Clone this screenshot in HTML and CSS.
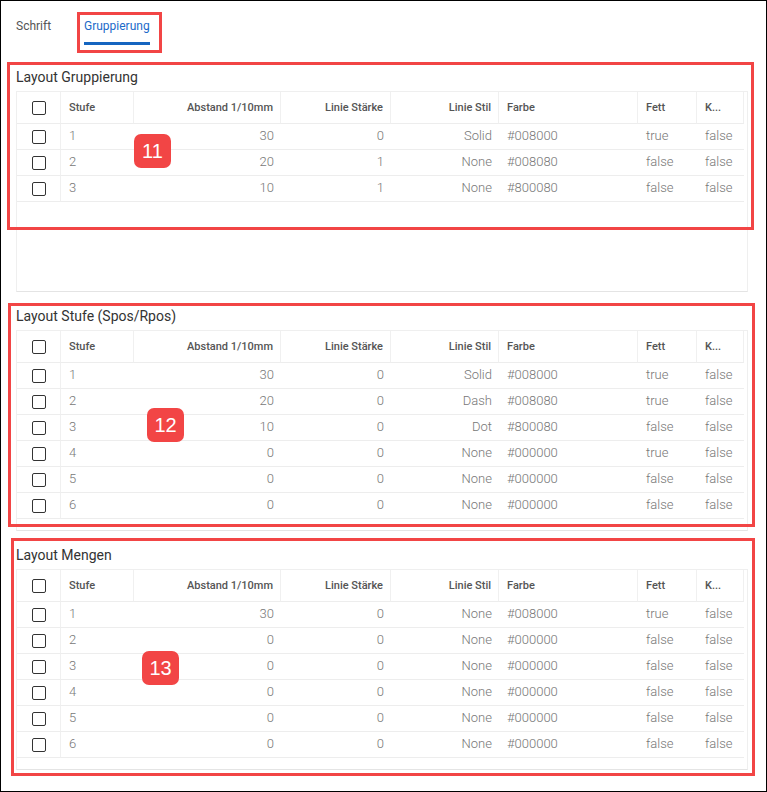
FILE: index.html
```html
<!DOCTYPE html>
<html lang="de">
<head>
    <meta charset="UTF-8">
    <meta name="viewport" content="width=device-width, initial-scale=1.0">
    <title>Layout</title>
    <link rel="stylesheet" href="styles.css">
</head>
<body>
    <div class="page">
        <nav class="tabs">
            <div class="tab"><span class="tab-label">Schrift</span></div>
            <div class="tab active"><span class="tab-label">Gruppierung</span></div>
        </nav>

        <section class="layout-section">
            <h2 class="section-title">Layout Gruppierung</h2>
            <div class="grid-panel">
                <table class="grid">
                    <colgroup>
                        <col class="c-check"><col class="c-stufe"><col class="c-abstand"><col class="c-staerke">
                        <col class="c-stil"><col class="c-farbe"><col class="c-fett"><col class="c-k">
                    </colgroup>
                    <thead>
                        <tr>
                            <th class="check"><span class="box"></span></th>
                            <th>Stufe</th>
                            <th class="num">Abstand 1/10mm</th>
                            <th class="num">Linie Stärke</th>
                            <th class="num">Linie Stil</th>
                            <th>Farbe</th>
                            <th>Fett</th>
                            <th>K...</th>
                        </tr>
                    </thead>
                    <tbody>
                        <tr><td class="check"><span class="box"></span></td><td>1</td><td class="num">30</td><td class="num">0</td><td class="num">Solid</td><td>#008000</td><td>true</td><td>false</td></tr>
                        <tr><td class="check"><span class="box"></span></td><td>2</td><td class="num">20</td><td class="num">1</td><td class="num">None</td><td>#008080</td><td>false</td><td>false</td></tr>
                        <tr><td class="check"><span class="box"></span></td><td>3</td><td class="num">10</td><td class="num">1</td><td class="num">None</td><td>#800080</td><td>false</td><td>false</td></tr>
                    </tbody>
                </table>
            </div>
        </section>

        <section class="layout-section">
            <h2 class="section-title">Layout Stufe (Spos/Rpos)</h2>
            <div class="grid-panel">
                <table class="grid">
                    <colgroup>
                        <col class="c-check"><col class="c-stufe"><col class="c-abstand"><col class="c-staerke">
                        <col class="c-stil"><col class="c-farbe"><col class="c-fett"><col class="c-k">
                    </colgroup>
                    <thead>
                        <tr>
                            <th class="check"><span class="box"></span></th>
                            <th>Stufe</th>
                            <th class="num">Abstand 1/10mm</th>
                            <th class="num">Linie Stärke</th>
                            <th class="num">Linie Stil</th>
                            <th>Farbe</th>
                            <th>Fett</th>
                            <th>K...</th>
                        </tr>
                    </thead>
                    <tbody>
                        <tr><td class="check"><span class="box"></span></td><td>1</td><td class="num">30</td><td class="num">0</td><td class="num">Solid</td><td>#008000</td><td>true</td><td>false</td></tr>
                        <tr><td class="check"><span class="box"></span></td><td>2</td><td class="num">20</td><td class="num">0</td><td class="num">Dash</td><td>#008080</td><td>true</td><td>false</td></tr>
                        <tr><td class="check"><span class="box"></span></td><td>3</td><td class="num">10</td><td class="num">0</td><td class="num">Dot</td><td>#800080</td><td>false</td><td>false</td></tr>
                        <tr><td class="check"><span class="box"></span></td><td>4</td><td class="num">0</td><td class="num">0</td><td class="num">None</td><td>#000000</td><td>true</td><td>false</td></tr>
                        <tr><td class="check"><span class="box"></span></td><td>5</td><td class="num">0</td><td class="num">0</td><td class="num">None</td><td>#000000</td><td>false</td><td>false</td></tr>
                        <tr><td class="check"><span class="box"></span></td><td>6</td><td class="num">0</td><td class="num">0</td><td class="num">None</td><td>#000000</td><td>false</td><td>false</td></tr>
                    </tbody>
                </table>
            </div>
        </section>

        <section class="layout-section">
            <h2 class="section-title">Layout Mengen</h2>
            <div class="grid-panel">
                <table class="grid">
                    <colgroup>
                        <col class="c-check"><col class="c-stufe"><col class="c-abstand"><col class="c-staerke">
                        <col class="c-stil"><col class="c-farbe"><col class="c-fett"><col class="c-k">
                    </colgroup>
                    <thead>
                        <tr>
                            <th class="check"><span class="box"></span></th>
                            <th>Stufe</th>
                            <th class="num">Abstand 1/10mm</th>
                            <th class="num">Linie Stärke</th>
                            <th class="num">Linie Stil</th>
                            <th>Farbe</th>
                            <th>Fett</th>
                            <th>K...</th>
                        </tr>
                    </thead>
                    <tbody>
                        <tr><td class="check"><span class="box"></span></td><td>1</td><td class="num">30</td><td class="num">0</td><td class="num">None</td><td>#008000</td><td>true</td><td>false</td></tr>
                        <tr><td class="check"><span class="box"></span></td><td>2</td><td class="num">0</td><td class="num">0</td><td class="num">None</td><td>#000000</td><td>false</td><td>false</td></tr>
                        <tr><td class="check"><span class="box"></span></td><td>3</td><td class="num">0</td><td class="num">0</td><td class="num">None</td><td>#000000</td><td>false</td><td>false</td></tr>
                        <tr><td class="check"><span class="box"></span></td><td>4</td><td class="num">0</td><td class="num">0</td><td class="num">None</td><td>#000000</td><td>false</td><td>false</td></tr>
                        <tr><td class="check"><span class="box"></span></td><td>5</td><td class="num">0</td><td class="num">0</td><td class="num">None</td><td>#000000</td><td>false</td><td>false</td></tr>
                        <tr><td class="check"><span class="box"></span></td><td>6</td><td class="num">0</td><td class="num">0</td><td class="num">None</td><td>#000000</td><td>false</td><td>false</td></tr>
                    </tbody>
                </table>
            </div>
        </section>
    </div>

    <!-- Markierungen -->
    <div class="mark mark-tab"></div>
    <div class="mark mark-1"></div>
    <div class="mark mark-2"></div>
    <div class="mark mark-3"></div>
    <div class="badge badge-1">11</div>
    <div class="badge badge-2">12</div>
    <div class="badge badge-3">13</div>
</body>
</html>
```

FILE: styles.css
```css
body {
    margin: 0;
    position: relative;
    font-family: Roboto, "Liberation Sans", sans-serif;
    background: #fff;
}
.page {
    height: 792px;
    box-sizing: border-box;
    border: 1px solid #000;
    padding: 0 18px 0 15px;
}
.tabs {
    display: flex;
    height: 44px;
    margin-bottom: 8px;
}
.tab {
    width: 68px;
    padding-top: 17px;
    font-size: 12px;
    color: #555;
}
.tab-label {
    display: inline-block;
    line-height: 16px;
    padding-bottom: 8px;
    border-bottom: 3px solid transparent;
}
.tab.active .tab-label {
    color: #1b6ac9;
    border-bottom-color: #1565c0;
}
.section-title {
    margin: 0;
    padding: 14px 0 4px;
    font-size: 14px;
    line-height: 20px;
    font-weight: 400;
    color: #333;
}
.grid-panel {
    height: 201px;
    box-sizing: border-box;
    border: 1px solid #efefef;
    border-bottom-color: #e4e4e4;
    padding-right: 3px;
}
.grid {
    width: 100%;
    table-layout: fixed;
    border-collapse: separate;
    border-spacing: 0;
}
.c-check { width: 44px; }
.c-stufe { width: 73px; }
.c-abstand { width: 147px; }
.c-staerke { width: 110px; }
.c-stil { width: 108px; }
.c-farbe { width: 139px; }
.c-fett { width: 59px; }
.c-k { width: 47px; }
.grid th,
.grid td {
    box-sizing: border-box;
    padding: 0 7px 0 8px;
    text-align: left;
    white-space: nowrap;
    overflow: hidden;
    border-bottom: 1px solid #ededed;
}
.grid th {
    height: 32px;
    font-size: 11px;
    font-weight: 500;
    color: #555;
    border-right: 1px solid #f0f0f0;
}
.grid td {
    height: 26px;
    padding-bottom: 2px;
    font-size: 13px;
    font-weight: 300;
    color: #777;
}
.grid td.check {
    border-right: 1px solid #f0f0f0;
}
.grid .num {
    text-align: right;
}
.grid .check {
    padding: 0;
    text-align: center;
}
.box {
    display: inline-block;
    width: 14px;
    height: 14px;
    box-sizing: border-box;
    border: 1.5px solid #333;
    border-radius: 2px;
    vertical-align: middle;
}
.mark {
    position: absolute;
    box-sizing: border-box;
    border: 3px solid #f24545;
}
.mark-tab { left: 77px; top: 12px; width: 85px; height: 41px; }
.mark-1 { left: 7px; top: 62px; width: 747px; height: 168px; }
.mark-2 { left: 8px; top: 303px; width: 747px; height: 224px; }
.mark-3 { left: 11px; top: 538px; width: 744px; height: 238px; }
.badge {
    position: absolute;
    width: 37px;
    height: 34px;
    border-radius: 7px;
    background: #f24545;
    color: #fff;
    font-family: "Liberation Sans", Arial, sans-serif;
    font-size: 20px;
    line-height: 34px;
    text-align: center;
}
.badge-1 { left: 134px; top: 134px; }
.badge-2 { left: 147px; top: 408px; }
.badge-3 { left: 142px; top: 651px; }
```
